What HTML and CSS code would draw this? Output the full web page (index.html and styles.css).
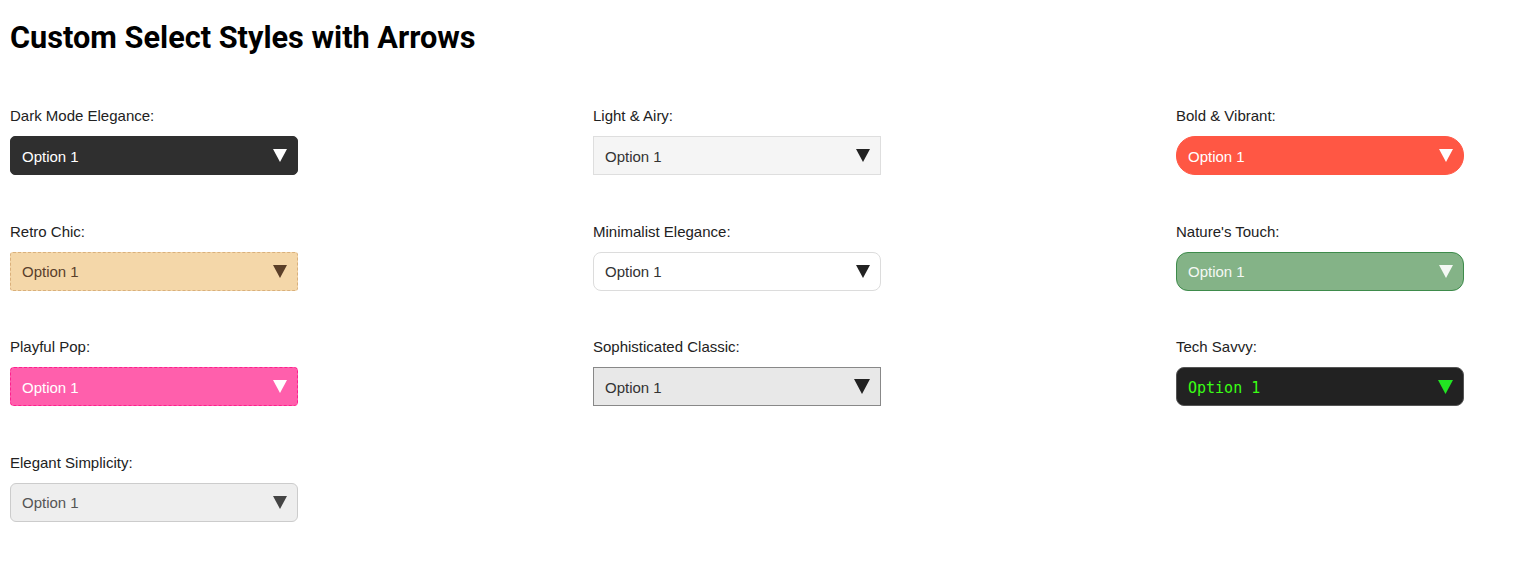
FILE: index.html
```html
<!DOCTYPE html>
<html lang="en">
<head>
<meta charset="utf-8">
<title>Custom Select Styles with Arrows</title>
<link rel="stylesheet" href="styles.css">
</head>
<body>
<h1 class="title">Custom Select Styles with Arrows</h1>
<div class="grid">
  <div class="field">
    <label class="label">Dark Mode Elegance:</label>
    <div class="select s-dark"><span>Option 1</span><svg class="arrow" viewBox="0 0 14 13"><polygon points="0,0 14,0 7,13"/></svg></div>
  </div>
  <div class="field">
    <label class="label">Light &amp; Airy:</label>
    <div class="select s-light"><span>Option 1</span><svg class="arrow" viewBox="0 0 14 13"><polygon points="0,0 14,0 7,13"/></svg></div>
  </div>
  <div class="field">
    <label class="label">Bold &amp; Vibrant:</label>
    <div class="select s-bold"><span>Option 1</span><svg class="arrow" viewBox="0 0 14 13"><polygon points="0,0 14,0 7,13"/></svg></div>
  </div>
  <div class="field">
    <label class="label">Retro Chic:</label>
    <div class="select s-retro"><span>Option 1</span><svg class="arrow" viewBox="0 0 14 13"><polygon points="0,0 14,0 7,13"/></svg></div>
  </div>
  <div class="field">
    <label class="label">Minimalist Elegance:</label>
    <div class="select s-minimal"><span>Option 1</span><svg class="arrow" viewBox="0 0 14 13"><polygon points="0,0 14,0 7,13"/></svg></div>
  </div>
  <div class="field">
    <label class="label">Nature's Touch:</label>
    <div class="select s-nature"><span>Option 1</span><svg class="arrow" viewBox="0 0 14 13"><polygon points="0,0 14,0 7,13"/></svg></div>
  </div>
  <div class="field">
    <label class="label">Playful Pop:</label>
    <div class="select s-playful"><span>Option 1</span><svg class="arrow" viewBox="0 0 14 13"><polygon points="0,0 14,0 7,13"/></svg></div>
  </div>
  <div class="field">
    <label class="label">Sophisticated Classic:</label>
    <div class="select s-classic"><span>Option 1</span><svg class="arrow big" viewBox="0 0 14 13"><polygon points="0,0 14,0 7,13"/></svg></div>
  </div>
  <div class="field">
    <label class="label">Tech Savvy:</label>
    <div class="select s-tech"><span>Option 1</span><svg class="arrow" viewBox="0 0 14 13"><polygon points="0,0 14,0 7,13"/></svg></div>
  </div>
  <div class="field">
    <label class="label">Elegant Simplicity:</label>
    <div class="select s-simple"><span>Option 1</span><svg class="arrow" viewBox="0 0 14 13"><polygon points="0,0 14,0 7,13"/></svg></div>
  </div>
</div>
</body>
</html>
```

FILE: styles.css
```css
html, body {
  margin: 0;
  background: #ffffff;
}
body {
  padding: 0 10px;
  font-family: "Liberation Sans", Arial, sans-serif;
  color: #222;
}
.title {
  font-family: Roboto, "Liberation Sans", sans-serif;
  font-weight: 700;
  font-size: 30.7px;
  line-height: 36px;
  margin: 20px 0 51px;
  color: #000;
}
.grid {
  display: grid;
  grid-template-columns: 583px 583px 1fr;
  row-gap: 47.6px;
}
.field {
  display: flex;
  flex-direction: column;
  align-items: flex-start;
}
.label {
  font-size: 15px;
  line-height: 18px;
  margin-bottom: 11px;
  color: #222;
}
.select {
  box-sizing: border-box;
  width: 288px;
  height: 39px;
  display: flex;
  align-items: center;
  justify-content: space-between;
  padding: 0 10px 0 11px;
  font-size: 15px;
  border: 1px solid transparent;
}
.select span {
  padding-top: 1px;
}
.arrow {
  width: 14px;
  height: 13px;
  fill: currentColor;
  flex: none;
}
.arrow.big {
  width: 16px;
  height: 15px;
}
.s-dark {
  background: #2f2f2f;
  color: #fff;
  border-color: #2f2f2f;
  border-radius: 5px;
}
.s-light {
  background: #f5f5f5;
  border-color: #dedede;
  color: #333;
  border-radius: 0;
}
.s-light .arrow { color: #222; }
.s-bold {
  background: #ff5744;
  border-color: #ff5744;
  color: #fff;
  border-radius: 19px;
}
.s-retro {
  background: #f4d7a9;
  border: 1px dashed #d9b07c;
  color: #5a3f2b;
  border-radius: 3px;
}
.s-retro .arrow { color: #5b3f28; }
.s-minimal {
  background: #fff;
  border-color: #dcdcdc;
  color: #333;
  border-radius: 8px;
}
.s-minimal .arrow { color: #222; }
.s-nature {
  background: #84b387;
  border-color: #3e8b4b;
  color: #f4f8f4;
  border-radius: 12px;
}
.s-playful {
  background: #ff5fac;
  border: 1px dashed #ff1f8e;
  color: #fff;
  border-radius: 4px;
}
.s-classic {
  background: #e8e8e8;
  border-color: #888;
  color: #333;
  border-radius: 0;
}
.s-classic .arrow { color: #222; }
.s-tech {
  background: #222;
  border-color: #555;
  color: #39ff14;
  border-radius: 8px;
  font-family: "DejaVu Sans Mono", "Liberation Mono", monospace;
  font-size: 15px;
}
.s-tech span { padding-top: 3px; }
.s-tech .arrow { width: 15px; height: 14px; color: #22e622; }
.s-simple {
  background: #eeeeee;
  border-color: #cccccc;
  color: #555;
  border-radius: 6px;
}
.s-simple .arrow { color: #444; }
```
